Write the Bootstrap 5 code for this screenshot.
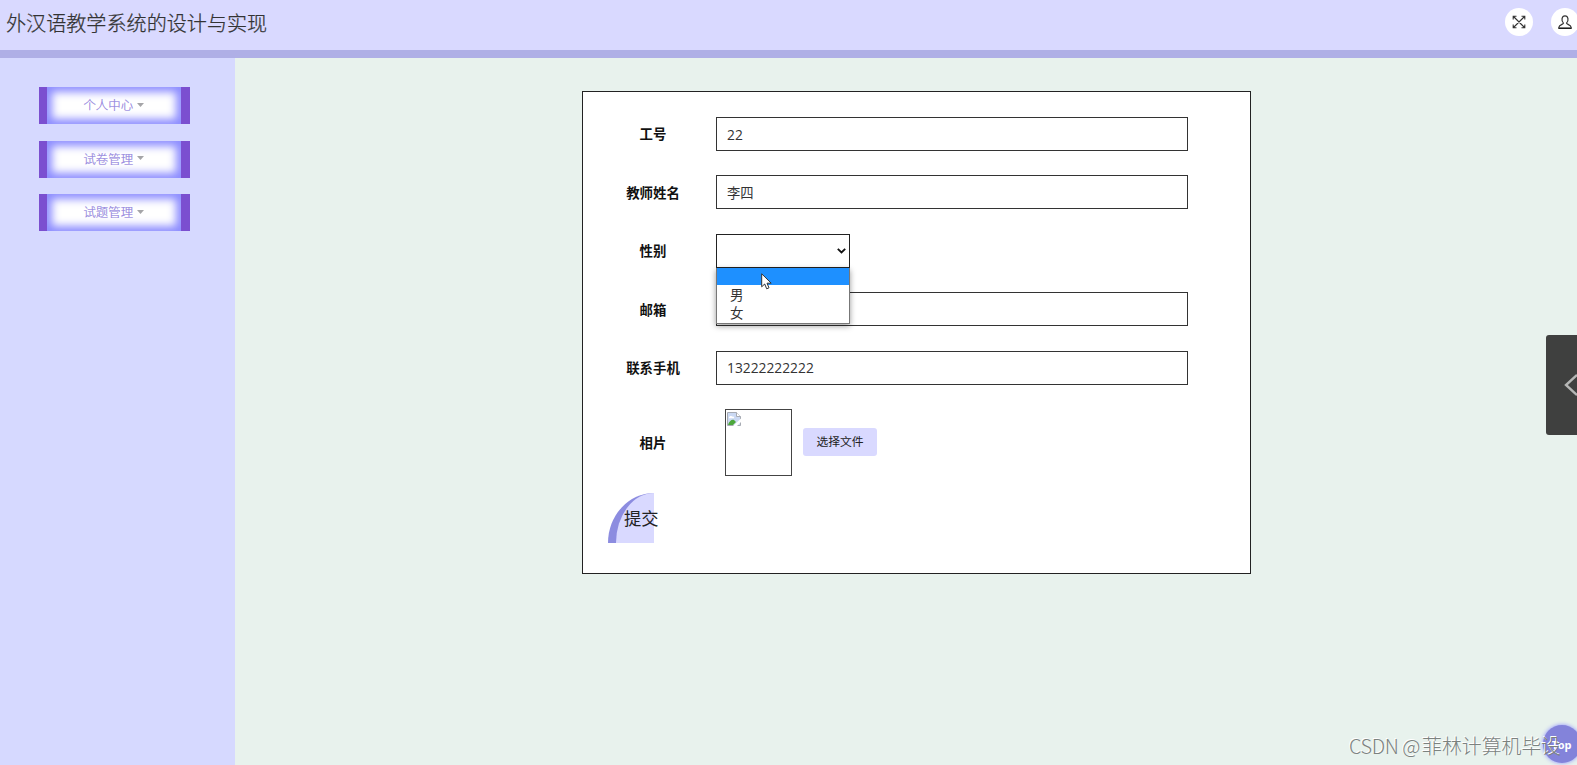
<!DOCTYPE html>
<html lang="zh-CN">
<head>
<meta charset="utf-8">
<meta name="viewport" content="width=device-width, initial-scale=1">
<title>外汉语教学系统的设计与实现</title>
<link href="https://cdn.jsdelivr.net/npm/bootstrap@5.3.0/dist/css/bootstrap.min.css" rel="stylesheet">
<style>
body{font-family:"Open Sans","Noto Sans CJK SC",sans-serif;font-size:13.4px;color:#333;background:#e8f2ed;height:765px;overflow:hidden;position:relative}
.topbar{height:58px;background:#d9d9ff;border-bottom:8px solid #afafe6;padding:0 0 6px 6px}
.title-text{font-size:20.1px;line-height:44px;font-weight:300;color:#333;-webkit-text-stroke:.25px #333;padding-top:4px}
.tools{gap:18px;margin-right:-2px}
.round-btn{width:28px;height:28px;background:#fff}
.sidebar{width:235px;background:#d6d9ff;padding:29px 45.5px 0 39px;gap:16.5px}
.menu-btn{height:37px;border:0 solid #7b4fd0;border-width:0 9px 0 8px;border-radius:0;background:#fff;box-shadow:inset 0 0 8px 5px #8c8cff;color:#8f80dc;font-size:12.4px;font-weight:300;-webkit-text-stroke:.2px #8f80dc;padding:2px 0 0;gap:4px}
.menu-btn svg{margin-top:-4px}
.panel{width:669px;height:483px;margin:33px 0 0 347px;border:1px solid #222;background:#fff;padding:25px}
.f-row{height:34px;margin-bottom:24.4px}
.f-label{width:90px;margin-right:18px;padding-top:1px;text-align:center;font-weight:700;color:#111;font-size:13.4px}
.f-input{width:472px;height:34px;border:1px solid #333;border-radius:0;padding:0 10px;font-size:13.8px;color:#333;background:#fff}
.f-input.zh{font-size:13.3px;padding-top:1px}
.pick{width:134px;height:34px;border:1px solid #222;background:#fff;padding-right:3px}
.pick-menu{left:0;top:34px;width:134px;height:56px;border:1px solid #777;border-top:0;background:#fff;box-shadow:0 2px 6px rgba(0,0,0,.4);z-index:5;font-size:13.5px;line-height:18px}
.pick-menu .on{height:17px;margin-bottom:1px;background:#1e90ff}
.pick-menu .opt{padding-left:13px}
.cursor{left:45px;top:39px;z-index:6}
.photo-row{height:67px}
.photo{width:67px;height:67px;border:1px solid #444;margin-left:9px;margin-right:11px;padding:2px 1px}
.file-btn{width:74px;height:28px;border-radius:3px;background:#d9d9ff;font-size:11.8px;color:#222;padding-bottom:1px}
.submit-btn{width:46px;height:50px;margin-top:17px;border:0;border-left:8px solid #8c8ce0;border-radius:46px 0 0 0/50px 0 0 0;background:#d9d9ff;font-size:17.3px;color:#222;padding:0 0 0 8px;white-space:nowrap;line-height:52px;text-align:left}
.drawer{right:0;top:335px;width:31px;height:100px;background:#3f403f;border-radius:3px 0 0 3px}
.to-top{left:1543px;top:725px;width:38px;height:38px;border-radius:50%;background:#8383da;box-shadow:0 0 4px #8a8aff;color:#fff;font-size:11px;font-weight:700;line-height:39px;padding-right:1px;text-align:center}
.stamp{left:1349px;top:731px;font-family:"Liberation Sans","Noto Sans CJK SC",sans-serif;font-size:19.9px;line-height:30px;font-weight:300;color:#7c827f;text-shadow:-1px -1px 0 #fff;white-space:nowrap}
.stamp .latin{display:inline-block;width:73px;font-family:"Noto Sans CJK SC",sans-serif;letter-spacing:-.4px}
</style>
</head>
<body>
<header class="topbar d-flex justify-content-between align-items-center">
  <div class="title-text">外汉语教学系统的设计与实现</div>
  <div class="tools d-flex">
    <span class="round-btn rounded-circle d-flex align-items-center justify-content-center">
      <svg width="14" height="14" viewBox="0 0 14 14" fill="none" stroke="#333" stroke-width="1.1"><path d="M1.5 1.5l11 11M12.5 1.5l-11 11M1.2 4.500V1.2H4.500M9.500 1.2h3.3V4.500M1.2 9.500v3.3H4.500M9.500 12.8h3.3V9.500"/></svg>
    </span>
    <span class="round-btn rounded-circle d-flex align-items-center justify-content-center">
      <svg width="14" height="14" viewBox="0 0 14 14" fill="none" stroke="#333" stroke-width="1.2"><path d="M5.5 8.1C3 6 3.6.8 7 .8S11 6 8.5 8.1c0 1.400 4.500 1.300 4.800 4.700M5.500 8.100c0 1.400-4.500 1.300-4.800 4.700"/><path d="M.3 13.200h13.400" stroke="#111" stroke-width="1.500"/></svg>
    </span>
  </div>
</header>
<div class="d-flex" style="height:707px">
  <nav class="sidebar d-flex flex-column flex-shrink-0">
    <button class="menu-btn d-flex align-items-center justify-content-center">个人中心<svg width="7" height="4"><path d="M0 0h7L3.500 4z" fill="#a5a5a8"/></svg></button>
    <button class="menu-btn d-flex align-items-center justify-content-center">试卷管理<svg width="7" height="4"><path d="M0 0h7L3.500 4z" fill="#a5a5a8"/></svg></button>
    <button class="menu-btn d-flex align-items-center justify-content-center">试题管理<svg width="7" height="4"><path d="M0 0h7L3.500 4z" fill="#a5a5a8"/></svg></button>
  </nav>
  <main>
    <form class="panel">
      <div class="f-row d-flex align-items-center"><label class="f-label">工号</label><input class="f-input" value="22"></div>
      <div class="f-row d-flex align-items-center"><label class="f-label">教师姓名</label><input class="f-input zh" value="李四"></div>
      <div class="f-row d-flex align-items-center"><label class="f-label">性别</label>
        <div class="position-relative">
          <div class="pick d-flex align-items-center justify-content-end"><svg width="9" height="6" viewBox="0 0 9 6" fill="none" stroke="#111" stroke-width="1.800"><path d="M.8.8l3.700 3.700L8.200.8"/></svg></div>
          <div class="pick-menu position-absolute"><div class="on"></div><div class="opt">男</div><div class="opt">女</div></div>
          <svg class="cursor position-absolute" width="12" height="17" viewBox="0 0 12 17"><path d="M.7.8v13l3-2.800 2 4.800 2.300-1-2-4.600h4.200z" fill="#fff" stroke="#333" stroke-width="1"/></svg>
        </div>
      </div>
      <div class="f-row d-flex align-items-center"><label class="f-label">邮箱</label><input class="f-input" value=""></div>
      <div class="f-row d-flex align-items-center"><label class="f-label">联系手机</label><input class="f-input" value="13222222222"></div>
      <div class="photo-row d-flex align-items-center"><label class="f-label">相片</label>
        <div class="photo d-flex align-items-start"><svg width="14" height="14" viewBox="0 0 14 14"><path d="M.5.5h9l4 4v9H.5z" fill="#cbd9f3" stroke="#a7abb3"/><path d="M9.500.5v4h4" fill="#fff" stroke="#a7abb3"/><path d="M2 5.500c0-2 3-2 3.500-.8 1.500-.4 2 .8 1.500 1.500H2z" fill="#fff"/><path d="M1 13c1-4 4-6 6-5l2 2-3 3z" fill="#4ca73c"/><path d="M6 14l8-7.500V10l-4 4z" fill="#fff"/></svg></div>
        <div class="file-btn d-flex align-items-center justify-content-center">选择文件</div>
      </div>
      <button type="button" class="submit-btn d-block">提交</button>
    </form>
  </main>
</div>
<aside class="drawer position-absolute d-flex align-items-center justify-content-end"><svg width="13" height="22" viewBox="0 0 13 22" fill="none" stroke="#b5b6b5" stroke-width="2.400"><path d="M13 1L2 11l11 10"/></svg></aside>
<div class="to-top position-absolute">Top</div>
<div class="stamp position-absolute"><span class="latin">CSDN @</span>菲林计算机毕设</div>
<script src="https://cdn.jsdelivr.net/npm/bootstrap@5.3.0/dist/js/bootstrap.bundle.min.js"></script>
</body>
</html>
